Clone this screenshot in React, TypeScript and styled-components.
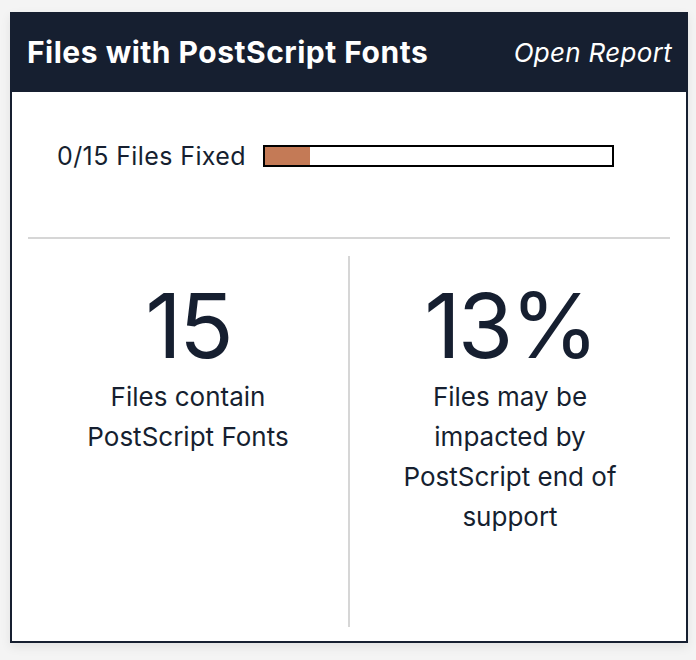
import React from "react";
import styled, { createGlobalStyle } from "styled-components";

const Global = createGlobalStyle`
  html, body { margin: 0; padding: 0; background: #f4f4f4; }
  body { font-family: Inter, "Open Sans", sans-serif; color: #161f30; }
`;

const Page = styled.div`
  padding: 12px 8px 17px 10px;
`;

const Card = styled.section`
  width: 678px;
  height: 631px;
  box-sizing: border-box;
  border: 2px solid #161f30;
  background: #fff;
  box-shadow: 0 4px 10px rgba(0, 0, 0, 0.08);
  display: flex;
  flex-direction: column;
`;

const Header = styled.header`
  height: 78px;
  background: #161f30;
  display: flex;
  align-items: center;
  justify-content: space-between;
  padding: 0 14px 2px 15px;
  box-sizing: border-box;
  color: #fff;
`;

const Title = styled.h1`
  margin: 0;
  font-size: 30px;
  font-weight: 700;
  letter-spacing: 0.5px;
`;

const ReportLink = styled.a`
  font-size: 26px;
  font-style: italic;
  font-weight: 400;
  letter-spacing: 0.3px;
  color: #fff;
  text-decoration: none;
`;

const Body = styled.div`
  flex: 1;
  display: flex;
  flex-direction: column;
  padding: 0 16px 14px;
`;

const ProgressRow = styled.div`
  display: flex;
  align-items: center;
  gap: 17px;
  height: 22px;
  margin: 53px 0 0 29px;
`;

const ProgressLabel = styled.span`
  font-size: 25px;
  letter-spacing: 0.4px;
`;

const Track = styled.div`
  width: 351px;
  height: 22px;
  box-sizing: border-box;
  border: 2px solid #000;
  background: #fff;
`;

const Fill = styled.div`
  height: 100%;
  background: #c47a56;
`;

const Divider = styled.hr`
  margin: 70px 0 0;
  border: none;
  height: 2px;
  background: #d6d6d6;
`;

const Stats = styled.div`
  flex: 1;
  display: grid;
  grid-template-columns: 1fr 2px 1fr;
  margin-top: 17px;
`;

const VRule = styled.div`
  background: #d6d6d6;
`;

const Stat = styled.div`
  display: flex;
  flex-direction: column;
  align-items: center;
  text-align: center;
  padding-top: 25px;
`;

const BigNumber = styled.div`
  font-size: 90px;
  line-height: 1;
  font-weight: 400;
  letter-spacing: -3px;
`;

const Caption = styled.p`
  margin: 6px 0 0;
  font-size: 26px;
  line-height: 40px;
  max-width: 240px;
`;

export default function App() {
  const fixed = 0;
  const total = 15;
  const pct = Math.max(13, (fixed / total) * 100);
  return (
    <>
      <Global />
      <Page>
        <Card>
          <Header>
            <Title>Files with PostScript Fonts</Title>
            <ReportLink href="#">Open Report</ReportLink>
          </Header>
          <Body>
            <ProgressRow>
              <ProgressLabel>0/15 Files Fixed</ProgressLabel>
              <Track>
                <Fill style={{ width: `${pct}%` }} />
              </Track>
            </ProgressRow>
            <Divider />
            <Stats>
              <Stat>
                <BigNumber>15</BigNumber>
                <Caption>Files contain PostScript Fonts</Caption>
              </Stat>
              <VRule />
              <Stat>
                <BigNumber>13%</BigNumber>
                <Caption>Files may be impacted by PostScript end of support</Caption>
              </Stat>
            </Stats>
          </Body>
        </Card>
      </Page>
    </>
  );
}
